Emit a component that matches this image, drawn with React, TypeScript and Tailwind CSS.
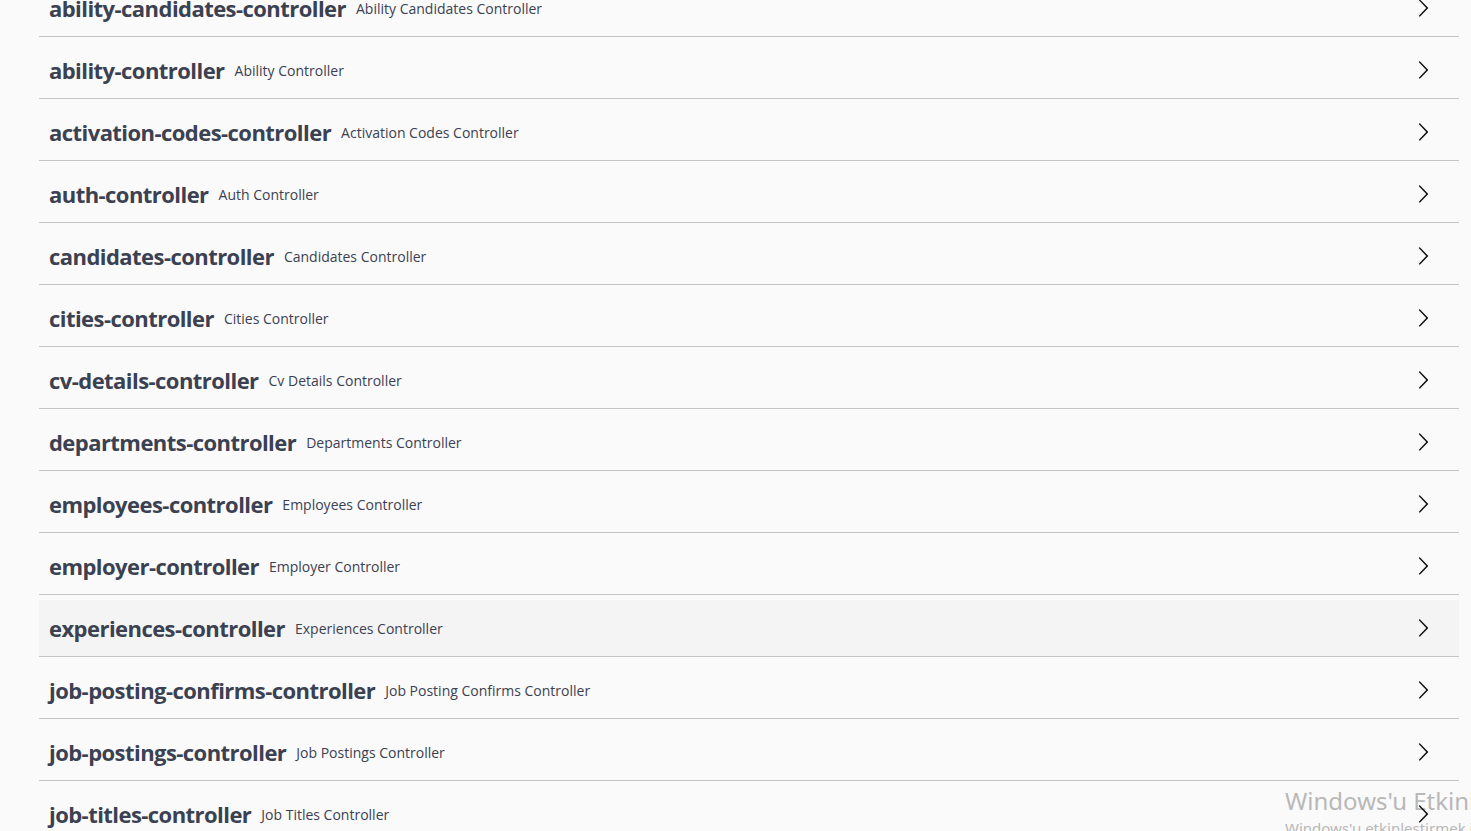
import { useState } from 'react';

const tags = [
  ['ability-candidates-controller', 'Ability Candidates Controller'],
  ['ability-controller', 'Ability Controller'],
  ['activation-codes-controller', 'Activation Codes Controller'],
  ['auth-controller', 'Auth Controller'],
  ['candidates-controller', 'Candidates Controller'],
  ['cities-controller', 'Cities Controller'],
  ['cv-details-controller', 'Cv Details Controller'],
  ['departments-controller', 'Departments Controller'],
  ['employees-controller', 'Employees Controller'],
  ['employer-controller', 'Employer Controller'],
  ['experiences-controller', 'Experiences Controller'],
  ['job-posting-confirms-controller', 'Job Posting Confirms Controller'],
  ['job-postings-controller', 'Job Postings Controller'],
  ['job-titles-controller', 'Job Titles Controller'],
];

function Arrow() {
  return (
    <svg width="20" height="20" viewBox="0 0 20 20" className="shrink-0 fill-[#111]">
      <path d="M13.25 10L6.109 2.58a.697.697 0 0 1 0-.979.68.68 0 0 1 .969 0l7.83 7.908a.697.697 0 0 1 0 .979l-7.83 7.908c-.268.271-.701.271-.969 0a.697.697 0 0 1 0-.979L13.25 10z" />
    </svg>
  );
}

export default function App() {
  const [hovered] = useState('experiences-controller');

  return (
    <div className="relative h-[831px] overflow-hidden bg-[#fafafa] text-[#3b4151]">
      <div className="relative z-10 -mt-[25px] pl-[39px] pr-[12px]">
        {tags.map(([name, desc]) => (
          <div key={name} className="pt-[5px]">
            <h3
              className={`flex h-[57px] items-center border-b border-[#c4c5c9] pl-[10px] pr-[26px] ${
                hovered === name ? 'bg-[#f4f4f4]' : ''
              }`}
            >
              <span
                className="text-[22px] font-bold tracking-[-0.55px] text-[#3b4151]"
                style={{ fontFamily: '"Open Sans", sans-serif' }}
              >
                {name}
              </span>
              <span
                className="ml-[10px] text-[14px] text-[#3b4151]"
                style={{ fontFamily: '"Open Sans", sans-serif' }}
              >
                {desc}
              </span>
              <span className="flex-1" />
              <Arrow />
            </h3>
          </div>
        ))}
      </div>

      <div
        className="pointer-events-none absolute left-[1285px] top-[784px] z-0 whitespace-nowrap text-[#b8b8b8]"
        style={{ fontFamily: '"Noto Sans", "Open Sans", sans-serif' }}
      >
        <div className="text-[24px] leading-[34px]">Windows'u Etkinleştirin</div>
        <div className="text-[15px] leading-[20px]">Windows'u etkinleştirmek için Ayarlar'a gidin.</div>
      </div>
    </div>
  );
}
